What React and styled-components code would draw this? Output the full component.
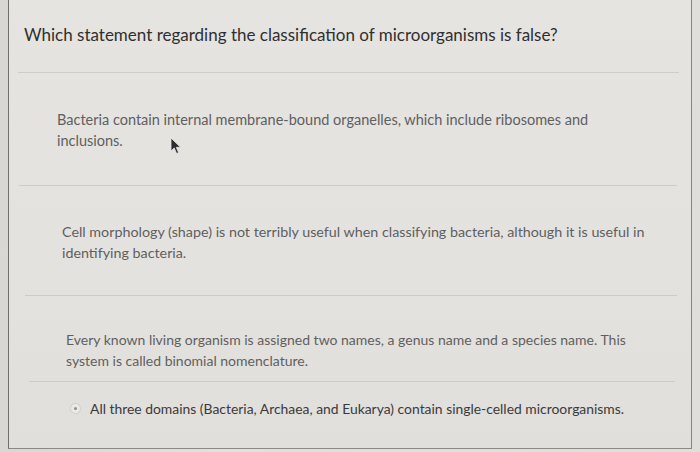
import React from 'react'
import styled, { createGlobalStyle } from 'styled-components'

const GlobalStyle = createGlobalStyle`
  html, body {
    margin: 0;
    padding: 0;
    background: #dcdad6;
    font-family: Lato, 'Open Sans', sans-serif;
  }
`

const Page = styled.div`
  width: 700px;
  height: 452px;
  overflow: hidden;
  position: relative;
  background: linear-gradient(90deg, #d9d7d3 0%, #e2e0dc 30%, #e0ded9 100%);
`

const Card = styled.div`
  margin-left: 8px;
  width: 684px;
  height: 449px;
  box-sizing: border-box;
  border-left: 1px solid #6f6f6c;
  border-right: 1px solid #85847f;
  border-bottom: 1px solid #8a8985;
  background: linear-gradient(180deg, #e6e4e0 0%, #e4e2de 60%, #e1dfdb 100%);
  display: flex;
  flex-direction: column;
`

const Header = styled.div`
  height: 73px;
  box-sizing: border-box;
  padding: 24px 0 0 6px;
  margin: 0 12px 0 9px;
  border-bottom: 1px solid #cfcdc9;
`

const Title = styled.h1`
  margin: 0;
  font-size: 17px;
  font-weight: 400;
  line-height: 22px;
  color: #2f2f30;
`

const Answer = styled.div`
  height: ${({ $h }) => $h}px;
  box-sizing: border-box;
  padding: ${({ $top }) => $top}px 0 0 ${({ $left }) => $left}px;
  margin: 0 ${({ $mr }) => $mr}px 0 ${({ $ml }) => $ml}px;
  border-bottom: ${({ $last }) => ($last ? 'none' : '1px solid #cdcbc7')};
  display: flex;
  align-items: flex-start;
  gap: 9px;
`

const AnswerText = styled.p`
  margin: 0;
  font-size: ${({ $size }) => $size}px;
  line-height: 21px;
  color: ${({ $strong }) => ($strong ? '#3a3a3b' : '#5f5f60')};
  white-space: nowrap;
`

const Radio = styled.span`
  width: 9px;
  height: 9px;
  margin-top: 5px;
  border-radius: 50%;
  border: 1px solid #d2d0cb;
  background: #ebe9e5;
  box-shadow: 0 0 0 1px #e0ded9;
  display: flex;
  align-items: center;
  justify-content: center;
  flex: none;

  &::after {
    content: '';
    width: 3px;
    height: 3px;
    border-radius: 50%;
    background: #8f8e8b;
  }
`

const Cursor = styled.svg`
  position: absolute;
  left: 170px;
  top: 137px;
`

const answers = [
  {
    lines: ['Bacteria contain internal membrane-bound organelles, which include ribosomes and', 'inclusions.'],
    h: 113, top: 36, left: 38, ml: 10, mr: 14, size: 14.5,
  },
  {
    lines: ['Cell morphology (shape) is not terribly useful when classifying bacteria, although it is useful in', 'identifying bacteria.'],
    h: 110, top: 35, left: 37, ml: 16, mr: 14, size: 14.3,
  },
  {
    lines: ['Every known living organism is assigned two names, a genus name and a species name. This', 'system is called binomial nomenclature.'],
    h: 86, top: 33, left: 37, ml: 20, mr: 16, size: 14,
  },
]

export default function App() {
  return (
    <Page>
      <GlobalStyle />
      <Card>
        <Header>
          <Title>Which statement regarding the classification of microorganisms is false?</Title>
        </Header>
        {answers.map((a, i) => (
          <Answer key={i} $h={a.h} $top={a.top} $left={a.left} $ml={a.ml} $mr={a.mr}>
            <AnswerText $size={a.size}>
              {a.lines[0]}
              <br />
              {a.lines[1]}
            </AnswerText>
          </Answer>
        ))}
        <Answer $h={66} $top={16} $left={37} $ml={24} $mr={16} $last>
          <Radio />
          <AnswerText $size={13.9} $strong>
            All three domains (Bacteria, Archaea, and Eukarya) contain single-celled microorganisms.
          </AnswerText>
        </Answer>
      </Card>
      <Cursor width="12" height="18" viewBox="0 0 12 18">
        <path d="M1 1 L1 14 L4.2 11 L6.6 16.5 L8.6 15.6 L6.3 10.3 L10.5 10.3 Z" fill="#2b2d33" stroke="#e8e6e2" strokeWidth="0.8" />
      </Cursor>
    </Page>
  )
}
